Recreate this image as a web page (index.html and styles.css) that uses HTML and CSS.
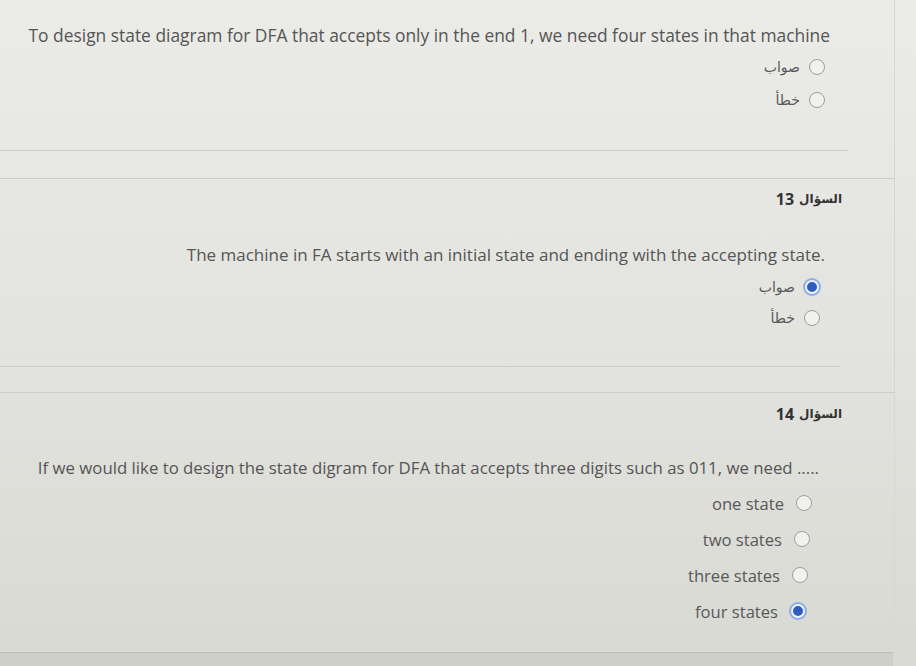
FILE: index.html
```html
<!DOCTYPE html>
<html lang="ar">
<head>
<meta charset="utf-8">
<title>Quiz</title>
<link rel="stylesheet" href="styles.css">
</head>
<body>
<div class="page">
  <section class="q q12">
    <p class="qtext" dir="ltr">To design state diagram for DFA that accepts only in the end 1, we need four states in that machine</p>
    <div class="opts">
      <label class="opt"><span class="lbl ar">صواب</span><span class="radio"></span></label>
      <label class="opt"><span class="lbl ar">خطأ</span><span class="radio"></span></label>
    </div>
    <hr class="rule short">
  </section>
  <hr class="rule full">

  <section class="q q13">
    <h3 class="qnum" dir="rtl"><span class="qword">السؤال</span><span class="qdigits">13</span></h3>
    <p class="qtext" dir="ltr">The machine in FA starts with an initial state and ending with the accepting state.</p>
    <div class="opts">
      <label class="opt"><span class="lbl ar">صواب</span><span class="radio on"></span></label>
      <label class="opt"><span class="lbl ar">خطأ</span><span class="radio"></span></label>
    </div>
    <hr class="rule short">
  </section>
  <hr class="rule full">

  <section class="q q14">
    <h3 class="qnum" dir="rtl"><span class="qword">السؤال</span><span class="qdigits">14</span></h3>
    <p class="qtext" dir="ltr">If we would like to design the state digram for DFA that accepts three digits such as 011, we need .....</p>
    <div class="opts">
      <label class="opt o1"><span class="lbl">one state</span><span class="radio"></span></label>
      <label class="opt o2"><span class="lbl">two states</span><span class="radio"></span></label>
      <label class="opt o3"><span class="lbl">three states</span><span class="radio"></span></label>
      <label class="opt o4"><span class="lbl">four states</span><span class="radio on"></span></label>
    </div>
  </section>
</div>
<div class="band"></div>
</body>
</html>
```

FILE: styles.css
```css
html, body {
  margin: 0;
  padding: 0;
}
body {
  width: 916px;
  height: 666px;
  overflow: hidden;
  background: linear-gradient(180deg, #ebebe8 0%, #e3e3df 50%, #d9d9d4 100%);
  font-family: "Open Sans", "Noto Sans", "DejaVu Sans", sans-serif;
  color: #555555;
}
.page {
  width: 895px;
  height: 652px;
  border-right: 1px solid #d6d6d2;
  box-sizing: border-box;
}
.q {
  margin: 0;
}
.qtext {
  margin: 0;
  font-size: 17.4px;
  line-height: 22px;
  text-align: right;
  white-space: nowrap;
}
.qnum {
  margin: 0;
  height: 22px;
  display: flex;
  align-items: center;
  justify-content: flex-start;
  gap: 5px;
  font-weight: 700;
  color: #333;
  padding-right: 52px;
  font-family: "Noto Sans", "DejaVu Sans", sans-serif;
}
.qword {
  font-size: 12px;
  font-weight: 600;
  line-height: 22px;
}
.qdigits {
  font-size: 16px;
  line-height: 22px;
  font-family: "Open Sans", "Noto Sans", sans-serif;
}
.opts {
  display: flex;
  flex-direction: column;
  align-items: flex-end;
}
.opt {
  display: flex;
  align-items: center;
  justify-content: flex-end;
  gap: 9px;
}
.lbl {
  font-size: 16.6px;
  color: #585858;
}
.lbl.ar {
  font-size: 14px;
  font-family: "Noto Sans", "DejaVu Sans", sans-serif;
}
.radio {
  width: 16px;
  height: 16px;
  box-sizing: border-box;
  border: 1.5px solid #9d9d9b;
  border-radius: 50%;
  background: #f1f1ef;
}
.radio.on {
  border: 2px solid #eef2fa;
  background: #2f5cbf;
  box-shadow: 0 0 0 2px #8faee6;
  width: 14px;
  height: 14px;
  margin: 0 1px;
}
.rule {
  border: 0;
  height: 1px;
  margin: 0;
  background: #cdcdc9;
}
.rule.short { width: 848px; }
.rule.full { width: 895px; margin-top: 27px; }

/* question 12 */
.q12 .qtext { padding: 24px 64px 0 0; }
.q12 .opts { margin-top: 4px; padding-right: 69px; }
.q12 .opt { height: 33px; }
.q12 .rule.short { margin-top: 34px; }

/* question 13 */
.q13 .qnum { margin-top: 9px; }
.q13 .qtext { margin-top: 34px; padding-right: 69px; font-size: 17px; }
.q13 .opts { margin-top: 5px; padding-right: 74px; }
.q13 .opt { height: 31px; }
.q13 .rule.short { width: 840px; margin-top: 33px; }
.q13 + .rule.full { margin-top: 25px; }

/* question 14 */
.q14 .qnum { margin-top: 10px; }
.q14 .qtext { margin-top: 32px; padding-right: 75px; font-size: 16.8px; }
.q14 .opts { margin-top: 6px; }
.q14 .opt { height: 36px; gap: 12px; }
.q14 .o1 { padding-right: 82px; }
.q14 .o2 { padding-right: 84px; }
.q14 .o3 { padding-right: 86px; }
.q14 .o4 { padding-right: 88px; }

.band {
  width: 893px;
  height: 14px;
  background: #cfcfca;
  border-top: 1px solid #bcbcb7;
}
```
